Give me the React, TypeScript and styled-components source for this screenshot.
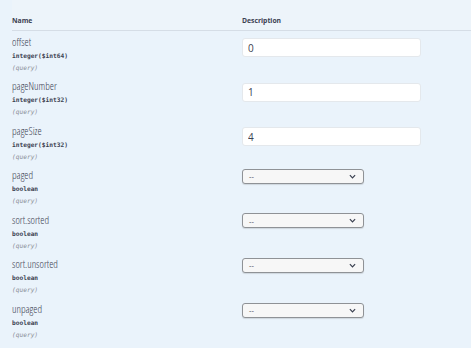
import React from "react";
import styled, { createGlobalStyle } from "styled-components";

const Global = createGlobalStyle`
  html, body { margin: 0; padding: 0; background: #ffffff; }
  body { width: 474px; height: 351px; overflow: hidden; }
`;

const Panel = styled.div`
  width: 471px;
  height: 348px;
  background: #eaf3fb;
  font-family: "Open Sans", sans-serif;
  color: #3b4151;
  box-sizing: border-box;
  display: flex;
  flex-direction: column;
`;

const HeaderRow = styled.div`
  display: grid;
  grid-template-columns: 230px 1fr;
  height: 31px;
  align-items: center;
  margin: 0 0 0 12px;
  border-bottom: 1px solid #d5dde6;
  background: #edf4fa;
  box-sizing: border-box;
  padding-top: 10px;
`;

const HeaderCell = styled.div`
  font-family: "Open Sans", sans-serif;
  font-size: 6.8px;
  font-weight: 700;
  color: #3b4151;
`;

const Body = styled.div`
  display: flex;
  flex-direction: column;
  padding: 4px 0 0 12px;
`;

const Row = styled.div`
  display: grid;
  grid-template-columns: 230px 1fr;
  height: 44.6px;
`;

const NameCell = styled.div`
  display: flex;
  flex-direction: column;
  align-items: flex-start;
`;

const ParamName = styled.div`
  font-family: "Open Sans", sans-serif;
  font-stretch: 87.5%;
  font-weight: 300;
  font-size: 10.5px;
  line-height: 13px;
  margin-top: 0.5px;
  color: #3b4151;
`;

const ParamType = styled.div`
  font-family: "DejaVu Sans Mono", "Liberation Mono", monospace;
  font-size: 6.2px;
  font-weight: 700;
  line-height: 12px;
  margin-top: 1px;
  color: #3b4151;
`;

const ParamIn = styled.div`
  font-family: "DejaVu Sans Mono", "Liberation Mono", monospace;
  font-size: 6.2px;
  font-style: italic;
  line-height: 12px;
  color: #8a8f99;
`;

const ValueCell = styled.div`
  padding-top: 3px;
`;

const TextInput = styled.input`
  display: block;
  box-sizing: border-box;
  width: 179px;
  height: 19px;
  padding: 0 0 0 5px;
  border: 1px solid #e4e8ec;
  border-radius: 3px;
  background: #ffffff;
  font-family: "Open Sans", "Noto Sans", sans-serif;
  font-size: 10px;
  color: #3b4151;
  outline: none;
`;

const SelectBox = styled.div`
  box-sizing: border-box;
  width: 122px;
  height: 15px;
  margin-top: -3px;
  border: 1px solid #8f9296;
  border-radius: 3px;
  background: #f7f7f7;
  box-shadow: 0 1px 1px rgba(0, 0, 0, 0.12);
  display: flex;
  align-items: center;
  justify-content: space-between;
  padding: 0 7px 0 6px;
  font-family: "Open Sans", sans-serif;
  font-size: 7.5px;
  color: #3b4151;
`;

const Chevron = styled.svg`
  width: 7px;
  height: 5px;
`;

type Param = { name: string; type: string; kind: "text" | "select"; value?: string };

const params: Param[] = [
  { name: "offset", type: "integer($int64)", kind: "text", value: "0" },
  { name: "pageNumber", type: "integer($int32)", kind: "text", value: "1" },
  { name: "pageSize", type: "integer($int32)", kind: "text", value: "4" },
  { name: "paged", type: "boolean", kind: "select" },
  { name: "sort.sorted", type: "boolean", kind: "select" },
  { name: "sort.unsorted", type: "boolean", kind: "select" },
  { name: "unpaged", type: "boolean", kind: "select" },
];

export default function App() {
  return (
    <>
      <Global />
      <Panel>
        <HeaderRow>
          <HeaderCell>Name</HeaderCell>
          <HeaderCell>Description</HeaderCell>
        </HeaderRow>
        <Body>
          {params.map((p) => (
            <Row key={p.name}>
              <NameCell>
                <ParamName>{p.name}</ParamName>
                <ParamType>{p.type}</ParamType>
                <ParamIn>(query)</ParamIn>
              </NameCell>
              <ValueCell>
                {p.kind === "text" ? (
                  <TextInput defaultValue={p.value} />
                ) : (
                  <SelectBox>
                    <span>--</span>
                    <Chevron viewBox="0 0 8 5">
                      <path d="M1 1 L4 4 L7 1" fill="none" stroke="#3b4151" strokeWidth="1.4" />
                    </Chevron>
                  </SelectBox>
                )}
              </ValueCell>
            </Row>
          ))}
        </Body>
      </Panel>
    </>
  );
}
